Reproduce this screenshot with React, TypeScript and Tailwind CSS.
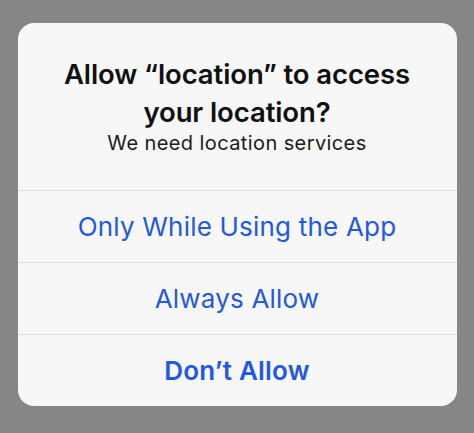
import React from 'react';

const font = { fontFamily: 'Inter, "Liberation Sans", sans-serif' };

const actions = [
  { label: 'Only While Using the App', bold: false },
  { label: 'Always Allow', bold: false },
  { label: 'Don\u2019t Allow', bold: true },
];

export default function App() {
  return (
    <div className="flex h-[433px] w-[474px] justify-center bg-[#868686] pt-[23px]" style={font}>
      <div className="h-[383px] w-[439px] overflow-hidden rounded-[16px] bg-[#f7f7f7]">
        <div className="px-4 pb-[35px] pt-[32px] text-center">
          <h1 className="text-[27.5px] font-semibold leading-[38px] tracking-[-0.1px] text-[#111]">
            Allow &ldquo;location&rdquo; to access
            <br />
            your location?
          </h1>
          <p className="text-[20px] leading-[24px] tracking-[0.4px] text-[#1a1a1a]">We need location services</p>
        </div>
        {actions.map((a) => (
          <button
            key={a.label}
            className={`flex h-[72px] w-full items-center justify-center border-t border-[#dcdcdc] text-[26px] tracking-[0.2px] text-[#2358e0] ${
              a.bold ? 'font-semibold' : 'font-normal'
            }`}
          >
            {a.label}
          </button>
        ))}
      </div>
    </div>
  );
}
